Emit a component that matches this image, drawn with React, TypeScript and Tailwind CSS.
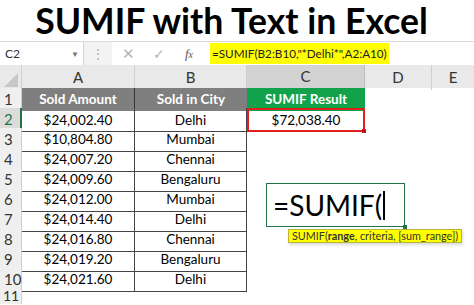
import React from "react";

const rows: [string, string][] = [
  ["$24,002.40", "Delhi"],
  ["$10,804.80", "Mumbai"],
  ["$24,007.20", "Chennai"],
  ["$24,009.60", "Bengaluru"],
  ["$24,012.00", "Mumbai"],
  ["$24,014.40", "Delhi"],
  ["$24,016.80", "Chennai"],
  ["$24,019.20", "Bengaluru"],
  ["$24,021.60", "Delhi"],
];

const cols = "grid grid-cols-[22px_113px_112px_118px_67px_42px]";

export default function App() {
  return (
    <div
      className="relative w-[474px] h-[305px] overflow-hidden bg-white text-black"
      style={{ fontFamily: "Lato, 'Open Sans', sans-serif" }}
    >
      {/* Title */}
      <div className="h-[41px] flex items-center justify-center">
        <h1 className="text-[35.6px] font-bold leading-none pt-[1px] pr-[11px]">
          SUMIF with Text in Excel
        </h1>
      </div>

      {/* Formula bar */}
      <div className="h-[24px] flex items-stretch bg-[#f3f3f3] border-t border-[#dadada]">
        <div className="w-[84px] bg-white border-r border-[#d4d4d4] flex items-center justify-between pl-[5px] pr-[4px] text-[12px] text-[#333]">
          <span>C2</span>
          <span className="text-[8px] text-[#777]">▼</span>
        </div>
        <div className="w-[28px] flex items-center justify-center text-[#aaa] text-[12px]">⋮</div>
        <div className="w-[98px] bg-white flex items-center text-[#9a9a9a]">
          <span className="w-[32px] text-center text-[15px] text-[#b5b5b5]">✕</span>
          <span className="w-[30px] text-center text-[14px] text-[#b5b5b5]">✓</span>
          <span className="w-[30px] text-center text-[13px] italic text-[#555]" style={{ fontFamily: "'Liberation Serif', serif" }}>
            f<span className="text-[10px]">x</span>
          </span>
        </div>
        <div className="flex-1 bg-white flex items-center">
          <div className="h-[21px] bg-[#ffff00] flex items-center px-[2px] text-[11.7px] text-[#222]">
            =SUMIF(B2:B10,"*Delhi*",A2:A10)
          </div>
        </div>
      </div>

      {/* Column headers */}
      <div className={`${cols} h-[23px] bg-[#e9e9e9] text-[15px] text-[#333]`}>
        <div className="relative border-r border-[#cfcfcf]">
          <div
            className="absolute right-[3px] bottom-[3px] w-0 h-0"
            style={{ borderLeft: "14px solid transparent", borderBottom: "14px solid #c8c8c8" }}
          />
        </div>
        <div className="flex items-center justify-center border-r border-[#cfcfcf]">A</div>
        <div className="flex items-center justify-center border-r border-[#cfcfcf]">B</div>
        <div className="flex items-center justify-center bg-[#d3d3d3] border-r border-[#bdbdbd] border-b-2 border-b-[#217346]">C</div>
        <div className="flex items-center justify-center border-r border-[#cfcfcf]">D</div>
        <div className="flex items-center justify-center">E</div>
      </div>

      {/* Row 1 */}
      <div className={`${cols} h-[20px] text-[13.5px]`}>
        <div className="bg-[#efefef] border-r border-[#cfcfcf] flex items-center pl-[4px] text-[15px] text-[#333]">1</div>
        <div className="bg-[#7f7f7f] text-white font-bold flex items-center justify-center border-r border-[#333]">
          Sold Amount
        </div>
        <div className="bg-[#7f7f7f] text-white font-bold flex items-center justify-center">Sold in City</div>
        <div className="bg-[#12a24c] text-white font-bold flex items-center justify-center">SUMIF Result</div>
        <div />
        <div />
      </div>

      {/* Data rows */}
      {rows.map(([amt, city], i) => {
        const n = i + 2;
        const active = n === 2;
        return (
          <div key={n} className={`${cols} h-[20px] text-[13.5px]`}>
            <div
              className={`flex items-center pl-[4px] text-[15px] border-r ${
                active ? "bg-[#dcdcdc] border-[#217346] border-r-2 text-[#217346]" : "bg-[#efefef] border-[#cfcfcf] text-[#333]"
              } border-b border-b-[#e0e0e0]`}
            >
              {n}
            </div>
            <div className="flex items-center justify-center border-b border-r border-[#444]">{amt}</div>
            <div className="flex items-center justify-center border-b border-r border-[#444]">{city}</div>
            {active ? (
              <div className="relative flex items-center justify-center border-2 border-[#e0201c]">
                $72,038.40
                <div className="absolute right-[-3px] bottom-[-3px] w-[4px] h-[4px] bg-[#c01818]" />
              </div>
            ) : (
              <div />
            )}
            <div />
            <div />
          </div>
        );
      })}

      {/* Row 11 */}
      <div className={`${cols} h-[16px]`}>
        <div className="bg-[#efefef] border-r border-[#cfcfcf] flex items-center pl-[3px] text-[14px] leading-none text-[#333]">11</div>
      </div>

      {/* In-cell editor */}
      <div className="absolute left-[266px] top-[183px] w-[139px] h-[44px] border-[1.5px] border-[#217346] bg-white flex items-center pl-[6px]">
        <span className="text-[28px] leading-none text-black">=SUMIF(</span>
        <span className="w-[1.5px] h-[29px] bg-black ml-[1px]" />
        <div className="absolute right-[-3px] bottom-[-3px] w-[4px] h-[4px] bg-[#217346]" />
      </div>

      {/* Tooltip */}
      <div className="absolute left-[288px] top-[229px] h-[14px] px-[3px] bg-[#ffff00] border border-[#b5b53a] flex items-center text-[10.8px] leading-none text-[#333] shadow-[1px_2px_3px_rgba(0,0,0,0.15)] whitespace-nowrap">
        SUMIF(<b>range</b>, criteria, [sum_range])
      </div>
    </div>
  );
}
